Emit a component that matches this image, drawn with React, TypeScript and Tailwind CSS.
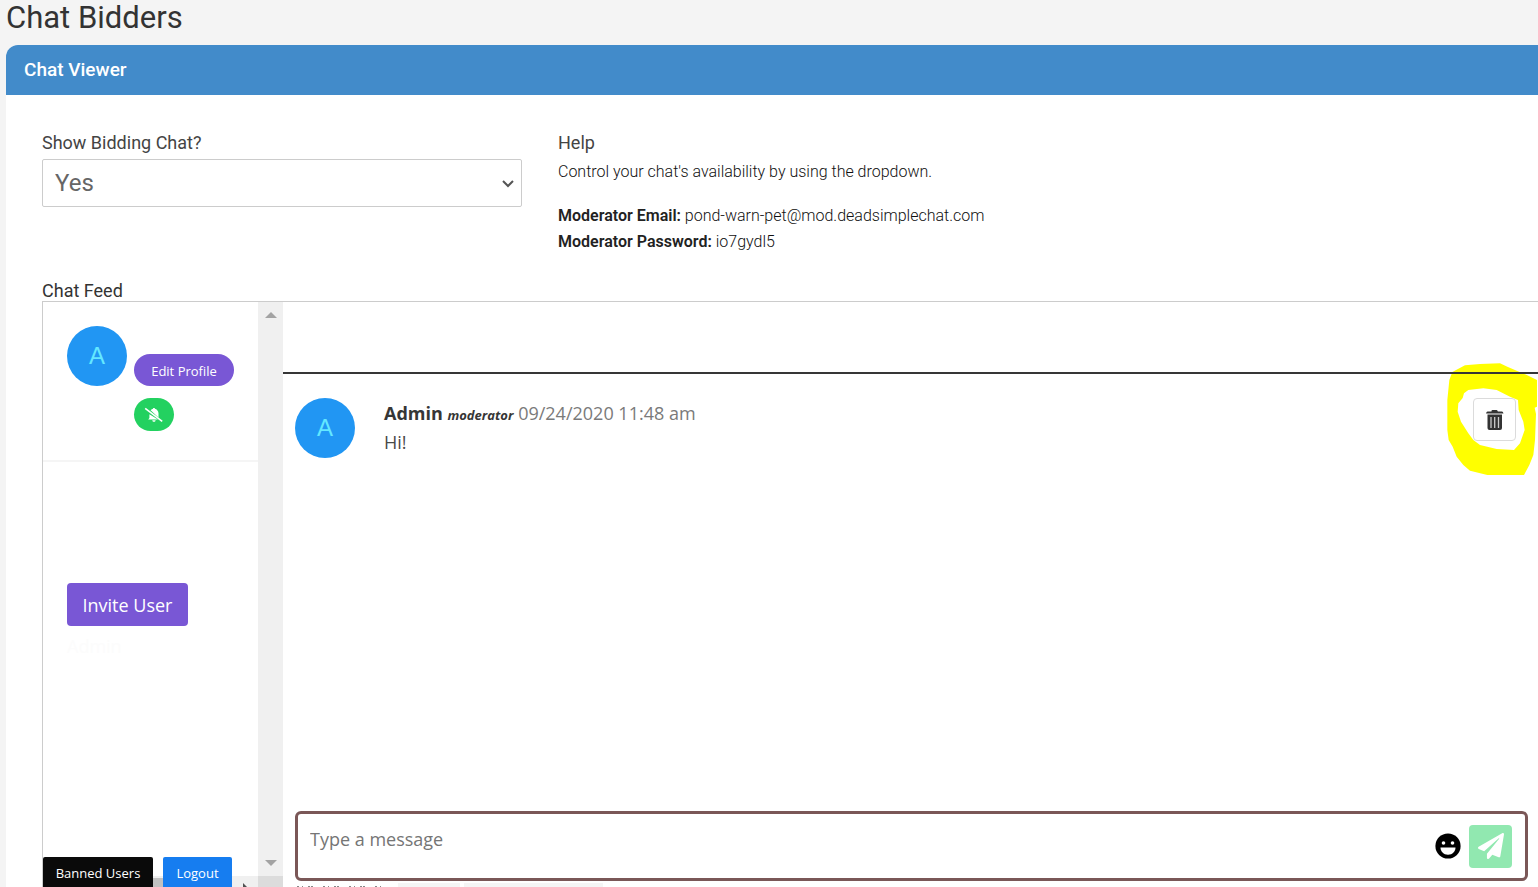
import { FaPaperPlane } from "react-icons/fa";

const Avatar: React.FC = () => (
  <div className="flex size-[60px] shrink-0 items-center justify-center rounded-full bg-[#2196f3] font-['Liberation_Sans'] text-2xl text-[#64e8ff]">
    A
  </div>
);

const BellOffIcon: React.FC = () => (
  <svg viewBox="0 0 20 16" className="h-4 w-5" fill="#fff">
    <path d="M4.2 12.4 5.4 11V7.2l8.5 5.2z" />
    <path d="M6.6 3.3C7.3 2.5 8.2 2 9.1 1.8V.9h1.7v.9c2.2.5 3.7 2.3 3.7 4.6v3.8l1.1 1.2z" />
    <path d="M8.3 13.2h3.3c0 2-3.3 2-3.3 0z" />
    <path d="m1.2 1.3 17 13" stroke="#fff" strokeWidth="1.6" />
  </svg>
);

const TrashIcon: React.FC = () => (
  <svg viewBox="0 0 18 20" className="h-5 w-[18px]" fill="#333">
    <path d="M5.5 1q0-1 1-1h4q1 0 1 1l.5.5h4q1 0 1.5 2H0q.5-2 1.5-2h4z" />
    <path d="M1.5 4.5h14.5V18q0 2-2 2H3.5q-2 0-2-2z" />
    <path d="M5 7v11M8.700 7v11M12.500 7v11" stroke="#ccc" strokeWidth="1.3" />
  </svg>
);

const SmileIcon: React.FC = () => (
  <svg viewBox="0 0 26 26" className="size-[26px]">
    <circle cx="13" cy="13" r="12.6" fill="#000" />
    <circle cx="8.5" cy="10" r="1.8" fill="#fff" />
    <circle cx="17.5" cy="10" r="1.8" fill="#fff" />
    <path d="M5.5 14.5h15c0 4-3 7.2-7.5 7.2s-7.5-3.2-7.5-7.2z" fill="#fff" />
  </svg>
);

// hand drawn marker around the delete button
const Marker: React.FC = () => (
  <svg
    viewBox="141 39 270 339"
    className="pointer-events-none absolute -top-[35px] -right-[21px] h-[113px] w-[90px]"
    fill="#ff0"
    fillRule="evenodd"
  >
    <path d="M148 90 157 66 195 46 240 42 300 40 322 50 350 62 385 77 411 90V170L404 173 408 192 405 270 400 315 388 345 372 375H262L210 362 190 345 170 320 158 290 146 270 142 240V150zM205 120 192 130 188 144 175 160 173 185 183 215 205 250 220 270 240 285 290 297 342 300 360 280 374 240 370 215 356 180 354 150 330 140 290 120 250 115z" />
  </svg>
);

const Sidebar: React.FC = () => (
  <aside className="relative flex w-[240px] shrink-0">
    <div className="flex flex-1 flex-col">
      <div className="flex h-[160px] gap-[7px] border-b-2 border-[#f5f5f5] px-6 pt-6">
        <Avatar />
        <div className="flex flex-col items-start gap-3 pt-7">
          <button className="h-8 w-[100px] rounded-full bg-[#7957d5] pt-[3px] text-[13px] font-medium whitespace-nowrap text-white">
            Edit Profile
          </button>
          <button
            aria-label="Mute notifications"
            className="flex h-[33px] w-10 items-center justify-center rounded-full bg-[#23d160]"
          >
            <BellOffIcon />
          </button>
        </div>
      </div>
      <div className="flex flex-col items-start px-6 pt-[121px]">
        <button className="h-[43px] w-[121px] rounded bg-[#7957d5] text-lg text-white">
          Invite User
        </button>
        <span className="mt-[6px] text-lg text-[#fcfcfc]">Admin</span>
      </div>
    </div>
    <div className="flex w-[25px] flex-col items-center justify-between bg-[#f0f0f0] pt-[10px] pb-[21px]">
      <svg viewBox="0 0 12 6" className="h-[6px] w-3" fill="#a3a3a3">
        <path d="M0 6 6 0l6 6z" />
      </svg>
      <svg viewBox="0 0 12 6" className="h-[6px] w-3" fill="#a3a3a3">
        <path d="m0 0 6 6 6-6z" />
      </svg>
    </div>
    {/* bottom scrollbar with the buttons over it */}
    <div className="absolute inset-x-0 bottom-0 flex h-[11px] overflow-hidden bg-[#f0f0f0]">
      <div className="mt-[2px] w-[170px] bg-[#c1c1c1]" />
      <svg viewBox="0 0 6 12" className="mt-[7px] ml-[30px] h-3 w-[6px]" fill="#505050">
        <path d="m0 0 6 6-6 6z" />
      </svg>
      <div className="ml-auto w-[25px] bg-[#dcdcdc]" />
    </div>
    <div className="absolute bottom-0 left-0 flex h-[30px] gap-[10px] text-[13px] font-medium text-white">
      <button className="w-[110px] rounded-t-xs bg-[#0a0a0a] pt-[3px]">Banned Users</button>
      <button className="w-[69px] rounded-t-xs bg-[#167df0] pt-[3px]">Logout</button>
    </div>
  </aside>
);

const Chat: React.FC = () => (
  <main className="flex min-w-0 flex-1 flex-col">
    <div className="relative z-10 h-[72px] shrink-0 border-b-2 border-[#363636]" />
    <div className="flex flex-1 items-start pt-6 pr-[22px] pl-3">
      <Avatar />
      <div className="ml-[29px] flex-1 pt-[2px] text-lg leading-[27px] text-[#4a4a4a]">
        <p>
          <strong className="text-[#363636]">Admin</strong>{" "}
          <em className="text-[13px] font-bold text-[#363636]">moderator</em>{" "}
          <span className="text-[#7a7a7a]">09/24/2020 11:48 am</span>
        </p>
        <p>Hi!</p>
      </div>
      <div className="relative">
        <Marker />
        <button
          aria-label="Delete message"
          className="relative flex size-[43px] items-center justify-center rounded border border-[#dbdbdb] bg-white"
        >
          <TrashIcon />
        </button>
      </div>
    </div>
    <form className="mr-[10px] ml-3 flex h-[70px] shrink-0 items-center rounded-md border-3 border-[#7a5757] pr-[13px] pl-3">
      <input
        aria-label="Message"
        placeholder="Type a message"
        className="mb-[14px] min-w-0 flex-1 text-lg outline-none placeholder:text-[#757575]"
      />
      <button type="button" aria-label="Emoji" className="mr-2">
        <SmileIcon />
      </button>
      <button
        type="button"
        aria-label="Send"
        className="flex size-[43px] items-center justify-center rounded bg-[#91e8b0]"
      >
        <FaPaperPlane className="size-[26px] text-white" />
      </button>
    </form>
    <div className="flex h-[6px] shrink-0 items-start overflow-hidden pt-[2px] pl-[13px]">
      <svg viewBox="0 0 102 4" className="h-1 w-[102px]" stroke="#888" strokeDasharray="2 3 1 5 2 1 2 10">
        <path d="M1 3.5h84" />
      </svg>
      <span className="h-1 w-[62px] bg-[#f5f5f5]" />
      <span className="ml-1 h-1 w-[139px] bg-[#f5f5f5]" />
    </div>
  </main>
);

const App: React.FC = () => {
  return (
    <div className="flex h-screen flex-col overflow-hidden bg-[#f4f4f4] pl-[6px] font-[Roboto,sans-serif] text-[#333]">
      <h1 className="h-[45px] shrink-0 text-[31px] leading-9">Chat Bidders</h1>
      <section className="flex min-h-0 flex-1 flex-col rounded-tl-xl bg-white">
        <h2 className="h-[50px] shrink-0 rounded-tl-xl bg-[#428bca] px-[18px] text-[19px] leading-[50px] font-medium text-white">
          Chat Viewer
        </h2>
        <div className="flex min-h-0 flex-1 flex-col pt-9 pl-9">
          <div className="flex h-[148px] shrink-0 gap-9">
            <div className="w-[480px]">
              <label htmlFor="show-chat" className="block text-lg leading-6 text-[#444]">
                Show Bidding Chat?
              </label>
              <div className="relative mt-1">
                <select
                  id="show-chat"
                  className="h-12 w-full appearance-none rounded-xs border border-[#ccc] bg-white px-3 text-2xl text-[#666]"
                >
                  <option>Yes</option>
                  <option>No</option>
                </select>
                <svg
                  viewBox="0 0 12 8"
                  className="pointer-events-none absolute top-[21px] right-2 h-2 w-3"
                  fill="none"
                  stroke="#555"
                  strokeWidth="2"
                >
                  <path d="m1 1 5 5 5-5" />
                </svg>
              </div>
            </div>
            <div className="text-base leading-[26px] font-light text-[#111]">
              <h3 className="text-lg leading-6 font-normal text-[#444]">Help</h3>
              <p className="mt-1">Control your chat's availability by using the dropdown.</p>
              <p className="mt-[18px]">
                <b className="font-semibold text-[#222]">Moderator Email:</b> pond-warn-pet@mod.deadsimplechat.com
              </p>
              <p>
                <b className="font-semibold text-[#222]">Moderator Password:</b> io7gydl5
              </p>
            </div>
          </div>
          <h3 className="h-[22px] shrink-0 text-lg leading-6">Chat Feed</h3>
          <div className="flex min-h-0 flex-1 border-t border-l border-[#ccc] font-['Open_Sans',sans-serif]">
            <Sidebar />
            <Chat />
          </div>
        </div>
      </section>
    </div>
  );
};

export default App;
